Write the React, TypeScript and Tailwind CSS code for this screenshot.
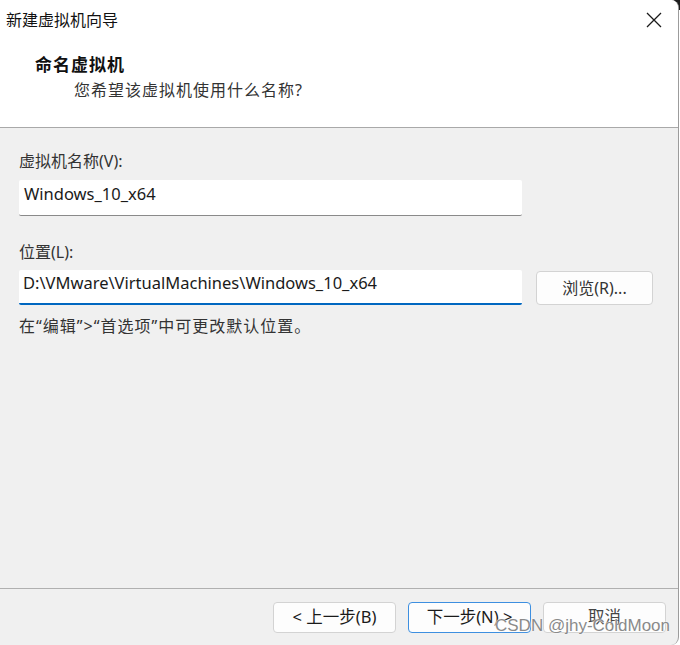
import React from "react";

const font = { fontFamily: '"Noto Sans", "Noto Sans CJK SC", sans-serif' };

export default function App() {
  return (
    <div className="relative w-[680px] h-[645px] bg-white overflow-hidden" style={font}>
      <div className="absolute right-0 top-0 w-[8px] h-[10px] bg-[#1e1e1e]" />
      <div className="relative w-[679px] h-[645px] flex flex-col border-r border-[#9c9c9c] rounded-tr-[8px] rounded-br-[8px] overflow-hidden bg-[#f0f0f0]">
        {/* header */}
        <div className="h-[128px] bg-white border-b border-[#a9a9a9] flex flex-col">
          <div className="h-[40px] flex items-center justify-between pl-[6px] pr-[15px]">
            <span className="text-[16px] text-[#111] leading-none">新建虚拟机向导</span>
            <svg width="16" height="16" viewBox="0 0 16 16" className="mr-[1px]">
              <path d="M1 1 L15 15 M15 1 L1 15" stroke="#1a1a1a" strokeWidth="1.3" fill="none" />
            </svg>
          </div>
          <div className="pl-[35px] mt-[13px] text-[17px] font-bold tracking-[1px] leading-[24px] text-[#111]">
            命名虚拟机
          </div>
          <div className="pl-[74px] mt-[1px] text-[16px] tracking-[1px] leading-[24px] text-[#333]">
            您希望该虚拟机使用什么名称?
          </div>
        </div>
        {/* body */}
        <div className="flex-1 flex flex-col pl-[19px] pt-[21px] text-[16px] text-[#1a1a1a]">
          <div className="leading-[24px] text-[#333]">虚拟机名称(V):</div>
          <div className="mt-[7px] w-[503px] h-[36px] bg-white border-b border-[#8a8a8a] rounded-[2px] flex items-center pl-[5px] pb-[7px] text-[16.5px]">
            Windows_10_x64
          </div>
          <div className="mt-[24px] leading-[24px] text-[#333]">位置(L):</div>
          <div className="mt-[6px] flex items-center gap-[14px]">
            <div className="w-[503px] h-[35px] bg-white border-b-2 border-[#0067c0] rounded-[2px] flex items-center pl-[4px] pb-[6px] text-[16.5px]">
              D:\VMware\VirtualMachines\Windows_10_x64
            </div>
            <button className="w-[117px] h-[34px] bg-[#fdfdfd] border border-[#d3d3d3] rounded-[4px] text-[16px] text-[#333] flex items-center justify-center">
              浏览(R)...
            </button>
          </div>
          <div className="mt-[9px] leading-[24px] text-[#333] tracking-[1px]">在“编辑”&gt;“首选项”中可更改默认位置。</div>
        </div>
        {/* footer */}
        <div className="h-[57px] border-t border-[#b0b0b0] flex justify-end gap-[12px] pt-[13px] pr-[12px]">
          <button className="w-[123px] h-[31px] bg-[#fdfdfd] border border-[#d3d3d3] rounded-[4px] text-[16.5px] text-[#1a1a1a] flex items-center justify-center">
            &lt; 上一步(B)
          </button>
          <button className="w-[123px] h-[31px] bg-[#fdfdfd] border border-[#3d8fe0] rounded-[4px] text-[16.5px] text-[#1a1a1a] flex items-center justify-center">
            下一步(N) &gt;
          </button>
          <button className="w-[123px] h-[31px] bg-[#fdfdfd] border border-[#d3d3d3] rounded-[4px] text-[16.5px] text-[#444] flex items-center justify-center">
            取消
          </button>
        </div>
      </div>
      <div
        className="absolute left-[495px] top-[614px] text-[17px] leading-[24px] text-[#8a8a8a] whitespace-nowrap"
        style={{ fontFamily: '"Liberation Sans", Arial, sans-serif', textShadow: "0 0 2px #ffffff, 0 0 1px #ffffff" }}
      >
        CSDN @jhy-ColdMoon
      </div>
    </div>
  );
}
